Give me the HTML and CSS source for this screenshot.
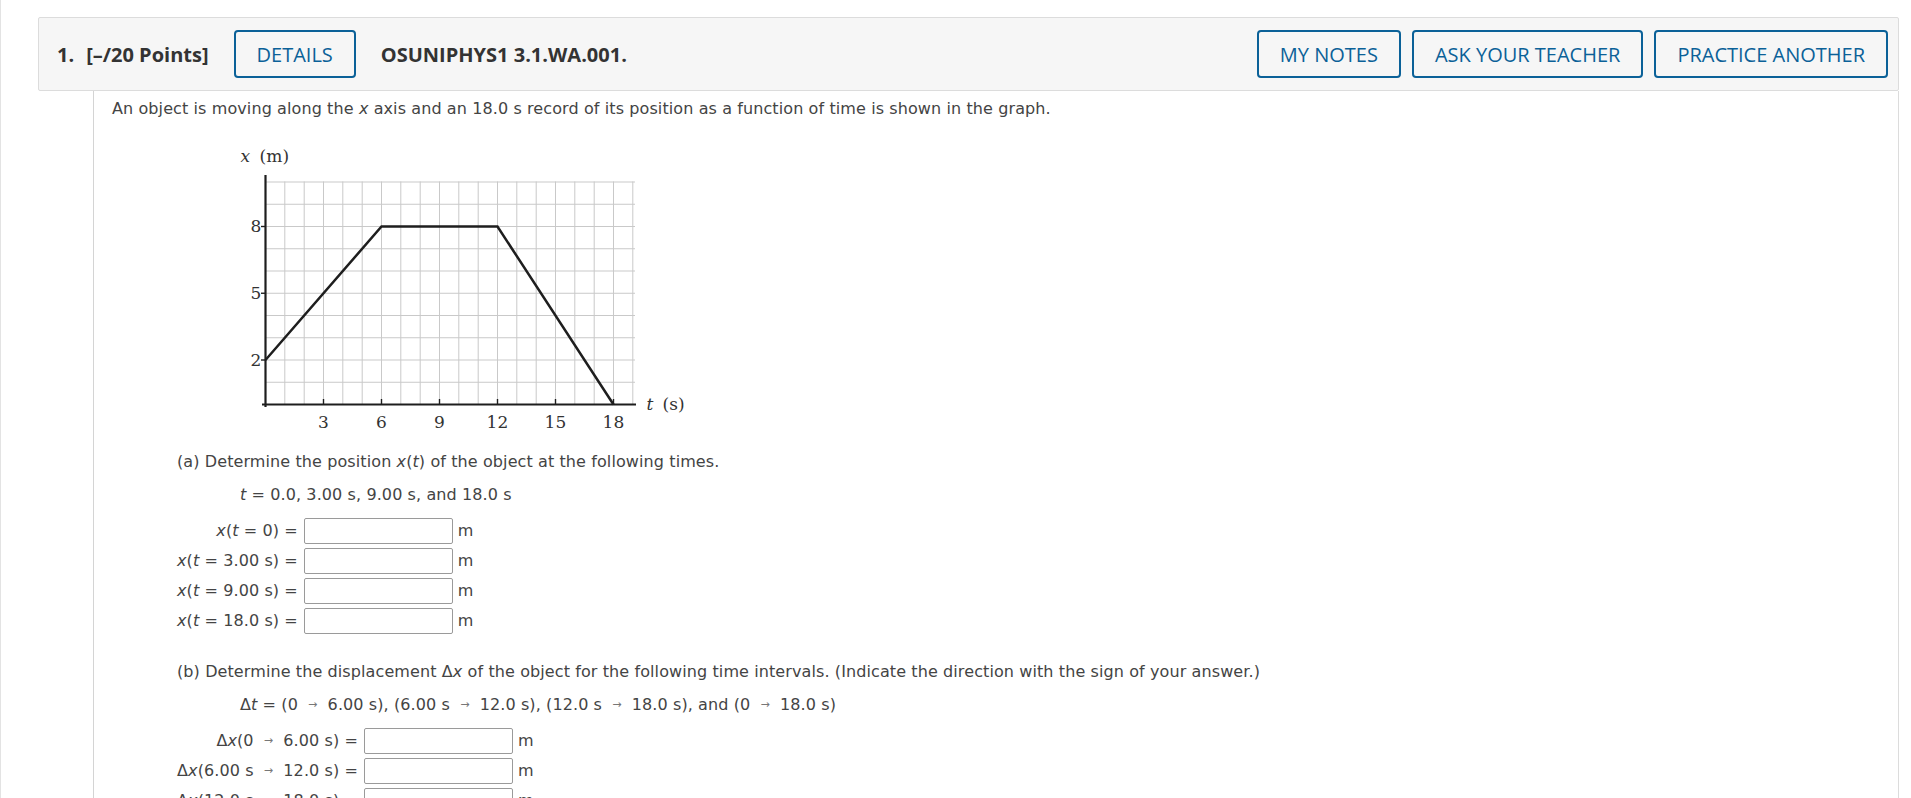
FILE: index.html
```html
<!DOCTYPE html>
<html lang="en">
<head>
<meta charset="utf-8">
<title>OSUNIPHYS1 3.1.WA.001.</title>
<link rel="stylesheet" href="styles.css">
</head>
<body>
<div class="page">
  <div class="qhead">
    <span class="qnum">1.</span>
    <span class="qpts">[–/20 Points]</span>
    <button class="btn">DETAILS</button>
    <span class="qid">OSUNIPHYS1 3.1.WA.001.</span>
    <div class="actions">
      <button class="btn">MY NOTES</button>
      <button class="btn">ASK YOUR TEACHER</button>
      <button class="btn">PRACTICE ANOTHER</button>
    </div>
  </div>
  <div class="qbody">
    <p class="intro">An object is moving along the <i>x</i> axis and an 18.0 s record of its position as a function of time is shown in the graph.</p>

    <svg class="graph" width="480" height="300" viewBox="230 140 480 300" xmlns="http://www.w3.org/2000/svg">
      <g class="grid">
        <line x1="284.8" y1="181.5" x2="284.8" y2="404.5"/>
        <line x1="304.2" y1="181.5" x2="304.2" y2="404.5"/>
        <line x1="323.5" y1="181.5" x2="323.5" y2="404.5"/>
        <line x1="342.8" y1="181.5" x2="342.8" y2="404.5"/>
        <line x1="362.2" y1="181.5" x2="362.2" y2="404.5"/>
        <line x1="381.5" y1="181.5" x2="381.5" y2="404.5"/>
        <line x1="400.8" y1="181.5" x2="400.8" y2="404.5"/>
        <line x1="420.2" y1="181.5" x2="420.2" y2="404.5"/>
        <line x1="439.5" y1="181.5" x2="439.5" y2="404.5"/>
        <line x1="458.8" y1="181.5" x2="458.8" y2="404.5"/>
        <line x1="478.2" y1="181.5" x2="478.2" y2="404.5"/>
        <line x1="497.5" y1="181.5" x2="497.5" y2="404.5"/>
        <line x1="516.8" y1="181.5" x2="516.8" y2="404.5"/>
        <line x1="536.2" y1="181.5" x2="536.2" y2="404.5"/>
        <line x1="555.5" y1="181.5" x2="555.5" y2="404.5"/>
        <line x1="574.8" y1="181.5" x2="574.8" y2="404.5"/>
        <line x1="594.2" y1="181.5" x2="594.2" y2="404.5"/>
        <line x1="613.5" y1="181.5" x2="613.5" y2="404.5"/>
        <line x1="632.8" y1="181.5" x2="632.8" y2="404.5"/>
        <line x1="265.5" y1="382.25" x2="635" y2="382.25"/>
        <line x1="265.5" y1="360" x2="635" y2="360"/>
        <line x1="265.5" y1="337.75" x2="635" y2="337.75"/>
        <line x1="265.5" y1="315.5" x2="635" y2="315.5"/>
        <line x1="265.5" y1="293.25" x2="635" y2="293.25"/>
        <line x1="265.5" y1="271" x2="635" y2="271"/>
        <line x1="265.5" y1="248.75" x2="635" y2="248.75"/>
        <line x1="265.5" y1="226.5" x2="635" y2="226.5"/>
        <line x1="265.5" y1="204.25" x2="635" y2="204.25"/>
        <line x1="265.5" y1="182" x2="635" y2="182"/>
      </g>
      <g class="axes">
        <line x1="265.5" y1="175" x2="265.5" y2="407"/>
        <line x1="262" y1="404.5" x2="636" y2="404.5"/>
        <line class="tick" x1="261" y1="226.5" x2="266" y2="226.5"/>
        <line class="tick" x1="261" y1="293.25" x2="266" y2="293.25"/>
        <line class="tick" x1="261" y1="360" x2="266" y2="360"/>
        <line class="tick" x1="323.5" y1="399" x2="323.5" y2="404"/>
        <line class="tick" x1="381.5" y1="399" x2="381.5" y2="404"/>
        <line class="tick" x1="439.5" y1="399" x2="439.5" y2="404"/>
        <line class="tick" x1="497.5" y1="399" x2="497.5" y2="404"/>
        <line class="tick" x1="555.5" y1="399" x2="555.5" y2="404"/>
        <line class="tick" x1="613.5" y1="399" x2="613.5" y2="404"/>
      </g>
      <polyline class="data" points="265.5,360 381.5,226.5 497.5,226.5 613.5,404.5"/>
      <g class="labels">
        <text class="it" x="240.5" y="162">x</text>
        <text x="259.5" y="162">(m)</text>
        <text class="ylab" x="261.5" y="232">8</text>
        <text class="ylab" x="261.5" y="299">5</text>
        <text class="ylab" x="261.5" y="366">2</text>
        <text class="xlab" x="323.5" y="428">3</text>
        <text class="xlab" x="381.5" y="428">6</text>
        <text class="xlab" x="439.5" y="428">9</text>
        <text class="xlab" x="497.5" y="428">12</text>
        <text class="xlab" x="555.5" y="428">15</text>
        <text class="xlab" x="613.5" y="428">18</text>
        <text class="it" x="646.5" y="410">t</text>
        <text x="662.5" y="410">(s)</text>
      </g>
    </svg>

    <p class="part">(a) Determine the position <i>x</i>(<i>t</i>) of the object at the following times.</p>
    <p class="given"><i>t</i> = 0.0, 3.00 s, 9.00 s, and 18.0 s</p>
    <div class="answers answers-a">
      <span class="lbl"><i>x</i>(<i>t</i> = 0) =</span><input class="box" type="text"><span class="unit">m</span>
      <span class="lbl"><i>x</i>(<i>t</i> = 3.00 s) =</span><input class="box" type="text"><span class="unit">m</span>
      <span class="lbl"><i>x</i>(<i>t</i> = 9.00 s) =</span><input class="box" type="text"><span class="unit">m</span>
      <span class="lbl"><i>x</i>(<i>t</i> = 18.0 s) =</span><input class="box" type="text"><span class="unit">m</span>
    </div>

    <p class="part part-b">(b) Determine the displacement Δ<i>x</i> of the object for the following time intervals. (Indicate the direction with the sign of your answer.)</p>
    <p class="given">Δ<i>t</i> = (0 <span class="arr">→</span> 6.00 s), (6.00 s <span class="arr">→</span> 12.0 s), (12.0 s <span class="arr">→</span> 18.0 s), and (0 <span class="arr">→</span> 18.0 s)</p>
    <div class="answers answers-b">
      <span class="lbl">Δ<i>x</i>(0 <span class="arr">→</span> 6.00 s) =</span><input class="box" type="text"><span class="unit">m</span>
      <span class="lbl">Δ<i>x</i>(6.00 s <span class="arr">→</span> 12.0 s) =</span><input class="box" type="text"><span class="unit">m</span>
      <span class="lbl">Δ<i>x</i>(12.0 s <span class="arr">→</span> 18.0 s) =</span><input class="box" type="text"><span class="unit">m</span>
      <span class="lbl">Δ<i>x</i>(0 <span class="arr">→</span> 18.0 s) =</span><input class="box" type="text"><span class="unit">m</span>
    </div>
  </div>
</div>
</body>
</html>
```

FILE: styles.css
```css
html {
  overflow: hidden;
}

body {
  margin: 0;
  background: #ffffff;
}

.page {
  border-left: 1px solid #e3e3e3;
  padding: 17px 12px 0 37px;
  min-height: 800px;
}

/* ---------- question header ---------- */
.qhead {
  display: flex;
  align-items: center;
  background: #f6f6f6;
  border: 1px solid #dcdcdc;
  border-radius: 2px;
  padding: 12px 10px 12px 18px;
  font-family: "Open Sans", "Noto Sans", sans-serif;
}

.qnum,
.qpts,
.qid {
  font-size: 20px;
  font-weight: 700;
  color: #333333;
  white-space: nowrap;
}

.qnum {
  margin-right: 12px;
}

.qpts {
  margin-right: 25px;
}

.qid {
  margin-left: 25px;
}

.btn {
  height: 48px;
  box-sizing: border-box;
  padding: 0 21px;
  border: 2px solid #0b6198;
  border-radius: 4px;
  background: transparent;
  color: #0b6198;
  font-family: "Open Sans", "Noto Sans", sans-serif;
  font-size: 20px;
  font-weight: 400;
  white-space: nowrap;
  cursor: pointer;
}

.actions {
  margin-left: auto;
  display: flex;
  gap: 11px;
}

/* ---------- question body ---------- */
.qbody {
  margin-left: 55px;
  border-left: 1px solid #d4d4d4;
  border-right: 1px solid #dcdcdc;
  padding: 8px 18px 0 18px;
  font-family: "DejaVu Sans", Verdana, sans-serif;
  font-size: 16px;
  line-height: 20px;
  letter-spacing: 0.1px;
  color: #444444;
}

.qbody p {
  margin: 0;
}

.intro {
  white-space: nowrap;
}

.graph {
  display: block;
  margin: 21px 0 0 118px;
}

.grid line {
  stroke: #c9c9c9;
  stroke-width: 1;
}

.axes line {
  stroke: #1e1e1e;
  stroke-width: 2.2;
}

.axes .tick {
  stroke-width: 1.4;
}

.data {
  fill: none;
  stroke: #1e1e1e;
  stroke-width: 2.5;
  stroke-linejoin: miter;
}

.labels text {
  font-family: "DejaVu Serif", "Liberation Serif", serif;
  font-size: 17px;
  fill: #333333;
}

.labels .it {
  font-style: italic;
}

.labels .ylab {
  text-anchor: end;
}

.labels .xlab {
  text-anchor: middle;
}

.part {
  margin-left: 65px !important;
  margin-top: 12px !important;
}

.part-b {
  margin-top: 28px !important;
}

.given {
  margin-left: 128px !important;
  margin-top: 13px !important;
}

.arr {
  font-size: 11px;
  color: #777777;
  vertical-align: 2px;
  margin: 0 5px;
}

.answers {
  display: grid;
  grid-template-columns: auto 149px auto;
  justify-content: start;
  align-items: center;
  row-gap: 4px;
  margin: 13px 0 0 65px;
}

.lbl {
  text-align: right;
  white-space: nowrap;
  margin-right: 6px;
}

.box {
  box-sizing: border-box;
  width: 149px;
  height: 26px;
  margin: 0;
  padding: 0 4px;
  border: 1px solid #9a9a9a;
  border-radius: 2px;
  background: #ffffff;
}

.unit {
  margin-left: 5px;
}
```
